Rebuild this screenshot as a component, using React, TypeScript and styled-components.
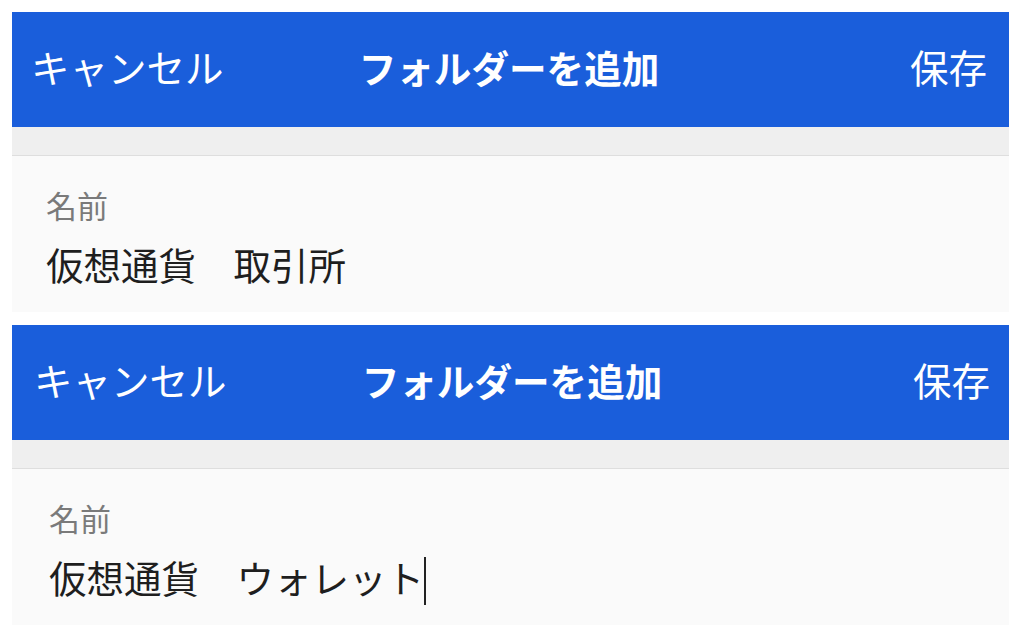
import React from "react";
import styled, { createGlobalStyle } from "styled-components";

const GlobalStyle = createGlobalStyle`
  html, body {
    margin: 0;
    padding: 0;
    background: #ffffff;
  }
  body {
    font-family: "Noto Sans CJK JP", "Noto Sans", sans-serif;
  }
`;

const Page = styled.div`
  display: flex;
  flex-direction: column;
  gap: 13px;
  padding: 12px 0 0 12px;
`;

const Panel = styled.section`
  width: 997px;
  display: flex;
  flex-direction: column;
`;

const Header = styled.header<{ $offset: number }>`
  height: 115px;
  box-sizing: border-box;
  padding: 0 ${(p) => 22 - p.$offset}px 6px ${(p) => 19 + p.$offset}px;
  background: #1a5edb;
  color: #ffffff;
  display: grid;
  grid-template-columns: 1fr auto 1fr;
  align-items: center;
`;

const NavButton = styled.span<{ $end?: boolean }>`
  font-size: 38.5px;
  line-height: 1;
  justify-self: ${(p) => (p.$end ? "end" : "start")};
`;

const Title = styled.h1`
  margin: 0;
  font-size: 37.6px;
  font-weight: 700;
  line-height: 1;
`;

const Spacer = styled.div`
  height: 28px;
  background: #efefef;
  border-bottom: 1px solid #dedede;
`;

const Content = styled.div<{ $offset: number }>`
  height: 156px;
  box-sizing: border-box;
  padding: 33px 0 0 ${(p) => 34 + p.$offset}px;
  background: #fafafa;
`;

const Label = styled.div`
  font-size: 31px;
  line-height: 1;
  color: #7a7a7a;
  margin-bottom: 25px;
`;

const Value = styled.div`
  display: flex;
  align-items: flex-start;
  font-size: 37.5px;
  line-height: 1;
  color: #1e1e1e;
`;

const Caret = styled.span`
  width: 2px;
  height: 48px;
  margin: -1px 0 0 0;
  background: #222222;
`;

type FolderFormProps = {
  value: string;
  focused?: boolean;
  offset?: number;
};

const FolderForm: React.FC<FolderFormProps> = ({ value, focused, offset = 0 }) => (
  <Panel>
    <Header $offset={offset}>
      <NavButton>キャンセル</NavButton>
      <Title>フォルダーを追加</Title>
      <NavButton $end>保存</NavButton>
    </Header>
    <Spacer />
    <Content $offset={offset}>
      <Label>名前</Label>
      <Value>
        <span>{value}</span>
        {focused && <Caret />}
      </Value>
    </Content>
  </Panel>
);

const App: React.FC = () => (
  <>
    <GlobalStyle />
    <Page>
      <FolderForm value="仮想通貨　取引所" />
      <FolderForm value="仮想通貨　ウォレット" focused offset={3} />
    </Page>
  </>
);

export default App;
